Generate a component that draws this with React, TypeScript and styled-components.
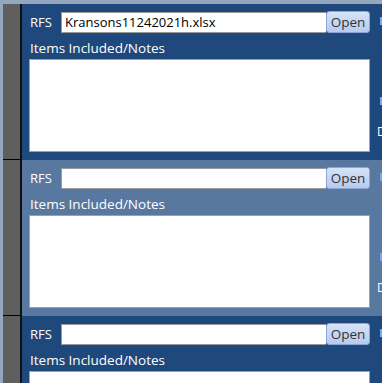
import React from "react";
import styled, { createGlobalStyle } from "styled-components";

const Global = createGlobalStyle`
  html, body { margin: 0; padding: 0; background: #95a7bf; }
  body { font-family: "Open Sans", "Noto Sans", sans-serif; overflow: hidden; }
`;

const Page = styled.div`
  width: 382px;
  height: 383px;
  padding: 4px 0 0 3px;
  box-sizing: border-box;
  overflow: hidden;
  background: #95a7bf;
`;

const Row = styled.div`
  display: flex;
  height: 156px;
`;

const Selector = styled.div`
  width: 17px;
  background: #5f5f5f;
  border-right: 2px solid #111;
  border-bottom: 1px solid #000;
  box-sizing: content-box;
  height: 155px;
`;

const Panel = styled.div<{ $alt?: boolean }>`
  flex: 1;
  display: flex;
  background: ${(p) => (p.$alt ? "#5878a0" : "#1f497c")};
  height: 156px;
  overflow: hidden;
`;

const Main = styled.div`
  width: 348px;
  flex-shrink: 0;
  padding: 7px 0 0 8px;
  box-sizing: border-box;
  display: flex;
  flex-direction: column;
`;

const TopLine = styled.div`
  display: flex;
  align-items: center;
  height: 22px;
`;

const Label = styled.span`
  color: #ffffff;
  font-size: 13px;
  line-height: 16px;
  white-space: nowrap;
`;

const RfsLabel = styled(Label)`
  width: 31px;
`;

const FileBox = styled.div`
  width: 265px;
  height: 21px;
  box-sizing: border-box;
  background: #fff;
  border: 1px solid #9a9a9a;
  border-right: none;
  font-size: 13px;
  line-height: 19px;
  padding-left: 3px;
  color: #000;
  white-space: nowrap;
  overflow: hidden;
`;

const OpenButton = styled.button`
  width: 44px;
  height: 22px;
  box-sizing: border-box;
  padding: 0;
  border: 1px solid #8ca6d6;
  border-radius: 3px;
  background: linear-gradient(#d6e3f8, #b6cbee);
  color: #333;
  font-family: "Open Sans", "Noto Sans", sans-serif;
  font-size: 13.5px;
  line-height: 18px;
`;

const NotesLabel = styled(Label)`
  margin-top: 7px;
  font-size: 13.5px;
`;

const Notes = styled.div`
  margin: 3px 0 0 -1px;
  width: 341px;
  height: 93px;
  box-sizing: border-box;
  background: #fff;
  border: 1px solid #a0a0a0;
`;

const Side = styled.div`
  display: flex;
  flex-direction: column;
  padding: 13px 0 0 10px;
`;

const Mark = styled.div<{ $top: number }>`
  width: 8px;
  height: 8px;
  margin-top: ${(p) => p.$top}px;
  background: #73aaf0;
`;

const SideText = styled.span`
  margin-top: 20px;
  margin-left: -3px;
  color: #fff;
  font-size: 12px;
  line-height: 14px;
`;

type Item = { file: string; alt: boolean };

const items: Item[] = [
  { file: "Kransons11242021h.xlsx", alt: false },
  { file: "", alt: true },
  { file: "", alt: false },
];

export default function App() {
  return (
    <>
      <Global />
      <Page>
        {items.map((it, i) => (
          <Row key={i}>
            <Selector />
            <Panel $alt={it.alt}>
              <Main>
                <TopLine>
                  <RfsLabel>RFS</RfsLabel>
                  <FileBox>{it.file}</FileBox>
                  <OpenButton>Open</OpenButton>
                </TopLine>
                <NotesLabel>Items Included/Notes</NotesLabel>
                <Notes />
              </Main>
              <Side>
                <Mark $top={0} />
                <Mark $top={72} />
                <SideText>D</SideText>
              </Side>
            </Panel>
          </Row>
        ))}
      </Page>
    </>
  );
}
